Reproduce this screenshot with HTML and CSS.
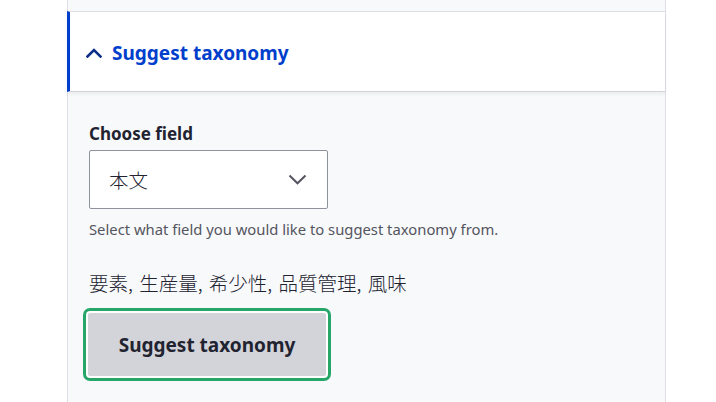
FILE: index.html
```html
<!DOCTYPE html>
<html lang="ja">
<head>
<meta charset="utf-8">
<title>Suggest taxonomy</title>
<link rel="stylesheet" href="styles.css">
</head>
<body>
<div class="details">
  <div class="summary">
    <svg class="summary-icon" width="16" height="10" viewBox="0 0 16 10" aria-hidden="true">
      <path d="M1.5 8.5 L8 2 L14.5 8.5" fill="none" stroke="#0b2f86" stroke-width="2.6" stroke-linecap="square"/>
    </svg>
    <span class="summary-title">Suggest taxonomy</span>
  </div>
  <div class="content">
    <div class="label">Choose field</div>
    <div class="select">
      <span class="select-value">本文</span>
      <svg class="select-icon" width="19" height="11" viewBox="0 0 19 11" aria-hidden="true">
        <path d="M1.5 1.5 L9.5 9.3 L17.5 1.5" fill="none" stroke="#545560" stroke-width="2"/>
      </svg>
    </div>
    <div class="description">Select what field you would like to suggest taxonomy from.</div>
    <div class="terms">要素, 生産量, 希少性, 品質管理, 風味</div>
    <div class="button-wrap">
      <button class="button" type="button">Suggest taxonomy</button>
    </div>
  </div>
</div>
</body>
</html>
```

FILE: styles.css
```css
html, body {
  margin: 0;
  padding: 0;
  background: #ffffff;
}
body {
  font-family: "Noto Sans", "Noto Sans CJK JP", sans-serif;
  color: #222330;
  height: 402px;
  overflow: hidden;
}
.details {
  margin-left: 67px;
  width: 599px;
  box-sizing: border-box;
  min-height: 402px;
  border-left: 1px solid #dedfe4;
  border-right: 1px solid #dedfe4;
  background: #f8f9fb;
  padding-top: 11px;
}
.summary {
  display: flex;
  align-items: center;
  height: 81px;
  box-sizing: border-box;
  margin-left: -1px;
  background: #ffffff;
  border-top: 1px solid #dedfe4;
  border-bottom: 1px solid #d3d4d9;
  border-left: 3px solid #003ecc;
  box-shadow: 0 2px 4px rgba(0, 0, 0, 0.06);
  padding-left: 16px;
  padding-top: 3px;
}
.summary-icon {
  display: block;
  margin-right: 10px;
  margin-top: -1px;
}
.summary-title {
  font-size: 19px;
  font-weight: 700;
  color: #003ecc;
  line-height: 1;
}
.content {
  padding: 30px 21px 0 21px;
}
.label {
  font-size: 17px;
  font-weight: 700;
  line-height: 24px;
  margin-bottom: 4px;
}
.select {
  display: flex;
  align-items: center;
  justify-content: space-between;
  width: 239px;
  height: 59px;
  box-sizing: border-box;
  border: 1px solid #8e929c;
  border-radius: 2px;
  background: #ffffff;
  padding: 0 20px 0 19px;
}
.select-value {
  font-family: "Noto Sans CJK JP", sans-serif;
  font-size: 19.5px;
  font-weight: 300;
  line-height: 1;
}
.select-icon {
  display: block;
}
.description {
  margin-top: 10px;
  font-size: 14.8px;
  line-height: 20px;
  color: #545560;
}
.terms {
  margin-top: 30px;
  font-family: "Noto Sans CJK JP", sans-serif;
  font-size: 19.5px;
  font-weight: 300;
  line-height: 28px;
  word-spacing: 2px;
}
.button-wrap {
  margin-top: 11px;
  margin-left: -6px;
}
.button {
  display: block;
  width: 248px;
  height: 73px;
  box-sizing: border-box;
  border: 3px solid #26a769;
  border-radius: 7px;
  padding: 0;
  background: #d3d4d9;
  box-shadow: inset 0 0 0 2px #ffffff;
  font-family: "Noto Sans", sans-serif;
  font-size: 19px;
  font-weight: 700;
  color: #222330;
  cursor: pointer;
}
```
